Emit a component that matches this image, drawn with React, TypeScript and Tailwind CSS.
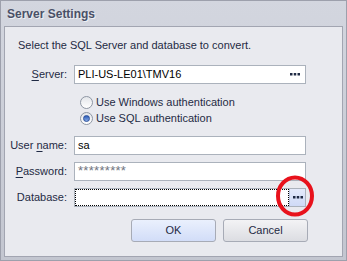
import React from 'react';

const font = { fontFamily: '"Liberation Sans", Arial, sans-serif' };

const Dots: React.FC = () => (
  <svg width="10" height="3" viewBox="0 0 10 3">
    <rect x="0" y="0" width="2.5" height="2.5" fill="#1f2a44" />
    <rect x="3.75" y="0" width="2.5" height="2.5" fill="#1f2a44" />
    <rect x="7.5" y="0" width="2.5" height="2.5" fill="#1f2a44" />
  </svg>
);

const Radio: React.FC<{ checked?: boolean; label: string }> = ({ checked, label }) => (
  <div className="flex items-center h-[16px] gap-[3px]">
    <div className="w-[13px] h-[13px] rounded-full border border-[#8e96a3] bg-gradient-to-b from-[#e4e6ea] to-[#ffffff] flex items-center justify-center">
      {checked && (
        <div className="w-[7px] h-[7px] rounded-full bg-gradient-to-b from-[#2d5db8] to-[#86a9e6] border border-[#2a4f9a]" />
      )}
    </div>
    <span className="leading-[16px]">{label}</span>
  </div>
);

const Label: React.FC<{ children: React.ReactNode }> = ({ children }) => (
  <div className="h-[19px] flex items-center justify-end leading-[13px]">{children}</div>
);

export default function App() {
  return (
    <div
      style={font}
      className="w-[347px] h-[261px] border border-[#9da0ac] bg-gradient-to-b from-[#d3d6df] to-[#c3c6d0] flex flex-col text-[11px] text-[#1f2a44]"
    >
      <div className="h-[25px] pl-[6px] pt-[6px]">
        <div className="text-[12px] font-bold leading-[14px] text-[#4a5067] [text-shadow:1px_1px_0_#eef0f4]">
          Server Settings
        </div>
      </div>
      <div className="flex-1 mx-[3px] mb-[3px] border border-[#a2a5b1] bg-[#e9eaef] relative">
        <div className="pl-[13px] pt-[12px] leading-[13px]">
          Select the SQL Server and database to convert.
        </div>
        <div className="grid grid-cols-[62px_232px] gap-x-[7px] mt-[13px]">
          <Label>
            <span>
              <span className="underline underline-offset-2">S</span>erver:
            </span>
          </Label>
          <div className="h-[19px] border border-[#abb2bc] bg-white flex items-center justify-between pl-[3px] pr-[5px] text-black leading-[13px]">
            <span>PLI-US-LE01\TMV16</span>
            <Dots />
          </div>

          <div />
          <div className="mt-[10px] pl-[6px]">
            <Radio label="Use Windows authentication" />
            <Radio checked label="Use SQL authentication" />
          </div>

          <div className="mt-[10px]">
            <Label>
              <span>
                User <span className="underline underline-offset-2">n</span>ame:
              </span>
            </Label>
          </div>
          <div className="mt-[10px] h-[19px] border border-[#abb2bc] bg-white flex items-center pl-[3px] text-black leading-[13px]">
            sa
          </div>

          <div className="mt-[7px]">
            <Label>
              <span>
                <span className="underline underline-offset-2">P</span>assword:
              </span>
            </Label>
          </div>
          <div className="mt-[7px] h-[19px] border border-[#abb2bc] bg-white flex items-start pt-[1px] pl-[3px] text-[#6f747e] text-[13px] leading-[14px] tracking-[0.3px]">
            *********
          </div>

          <div className="mt-[7px]">
            <Label>Database:</Label>
          </div>
          <div className="mt-[7px] h-[19px] border border-[#abb2bc] bg-white flex">
            <div className="flex-1 border border-dotted border-black" />
            <div className="w-[16px] bg-gradient-to-b from-[#e4eafb] to-[#cfdaf6] border-l border-[#b9c4de] flex items-center justify-center">
              <Dots />
            </div>
          </div>
        </div>
        <div className="flex justify-end gap-[7px] mt-[12px] pr-[34px]">
          <button className="w-[85px] h-[23px] rounded-[3px] border border-[#a7abb6] bg-gradient-to-b from-[#eaf0fd] to-[#d2ddf8] text-[#1f2a44] leading-[13px]">
            OK
          </button>
          <button className="w-[85px] h-[23px] rounded-[3px] border border-[#a7abb6] bg-gradient-to-b from-[#f3f3f5] to-[#dcdde2] text-[#1f2a44] leading-[13px]">
            Cancel
          </button>
        </div>
        <svg
          className="absolute left-[270px] top-[148px] pointer-events-none"
          width="40"
          height="42"
          viewBox="0 0 40 42"
        >
          <ellipse cx="20" cy="21" rx="17" ry="18.5" fill="none" stroke="#e8121c" strokeWidth="4" />
        </svg>
      </div>
    </div>
  );
}
